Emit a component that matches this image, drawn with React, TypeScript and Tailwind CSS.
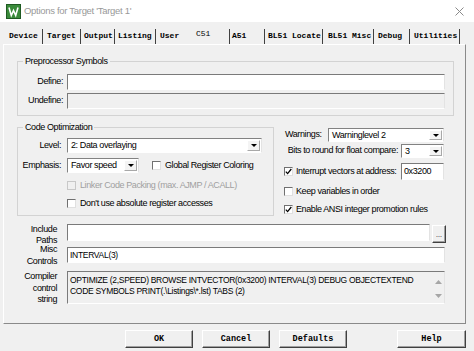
import React from "react";

const tabs = [
  { label: "Device", cls: "w-[37px] pl-[3px] border-r" },
  { label: "Target", cls: "w-[38px] pl-[4px] border-r" },
  { label: "Output", cls: "w-[34px] pl-[3px] border-r" },
  { label: "Listing", cls: "w-[41px] pl-[3px] border-r" },
  { label: "User", cls: "w-[30px] pl-[4px]" },
  { label: "C51", cls: "w-[43px] pl-[10px] font-normal -mt-[2px]" },
  { label: "A51", cls: "w-[36px] pl-[2px] border-l border-r" },
  { label: "BL51 Locate", cls: "w-[58px] pl-[3px] border-r" },
  { label: "BL51 Misc", cls: "w-[51px] pl-[5px] border-r" },
  { label: "Debug", cls: "w-[36px] pl-[4px] border-r" },
  { label: "Utilities", cls: "w-[50px] pl-[4px] border-r" },
];

const Check = ({ checked = false, disabled = false }: { checked?: boolean; disabled?: boolean }) => (
  <span
    className={
      "w-[9px] h-[9px] shrink-0 flex items-center justify-center border " +
      (disabled
        ? "border-[#c8c8c8] bg-[#f0f0f0]"
        : "border-t-[#707070] border-l-[#707070] border-b-[#e0e0e0] border-r-[#e0e0e0] bg-white")
    }
  >
    {checked && (
      <svg width="7" height="7" viewBox="0 0 7 7">
        <path d="M0.8 3.6 L2.6 5.6 L6.3 1" stroke="#000" strokeWidth="1.3" fill="none" />
      </svg>
    )}
  </span>
);

const Combo = ({ value, className }: { value: string; className: string }) => (
  <div
    className={
      "flex bg-white border border-t-[#828282] border-l-[#828282] border-b-white border-r-[#e3e3e3] " +
      className
    }
  >
    <span className="flex-1 min-w-0 pl-[3px] self-center whitespace-nowrap leading-[11px]">{value}</span>
    <span className="w-[13px] my-[1px] mr-[1px] flex items-center justify-center bg-[#f4f4f4] border border-t-white border-l-white border-b-[#a8a8a8] border-r-[#a8a8a8]">
      <svg width="6" height="3" viewBox="0 0 6 3">
        <path d="M0 0h6L3 3z" fill="#000" />
      </svg>
    </span>
  </div>
);

const sunken = "border border-t-[#7a7a7a] border-l-[#7a7a7a] border-b-white border-r-[#e3e3e3]";
const raised =
  "bg-[#f0f0f0] border border-t-white border-l-white border-r-[#404040] border-b-[#404040] shadow-[inset_-1px_-1px_0_#a0a0a0]";

export default function App() {
  return (
    <div className="w-[474px] h-[351px] overflow-hidden bg-[#f0f0f0] text-black text-[9px] tracking-[-0.4px] whitespace-nowrap font-['Liberation_Sans',Arial,sans-serif]">
      {/* title bar */}
      <div className="h-[22px] bg-white flex items-center pl-[6px]">
        <svg width="15" height="15" viewBox="0 0 15 15">
          <rect x="0.5" y="0.5" width="14" height="14" fill="#3a8a3a" stroke="#1f5a22" />
          <path d="M3 3.5 L5.3 11.5 L7.5 6.5 L9.7 11.5 L12 3.5" stroke="#fff" strokeWidth="1.6" fill="none" />
        </svg>
        <span className="ml-[3px] text-[9.5px] tracking-[-0.3px] text-[#999]">Options for Target 'Target 1'</span>
        <svg className="ml-auto mr-[10px]" width="9" height="9" viewBox="0 0 9 9">
          <path d="M0.5 0.5 L8.5 8.5 M8.5 0.5 L0.5 8.5" stroke="#8a8a8a" strokeWidth="1" />
        </svg>
      </div>

      {/* tabs */}
      <div className="h-[22px] pt-[7px] pl-[6px] flex font-['Liberation_Mono',monospace] font-bold text-[8px] tracking-normal">
        {tabs.map((t) => (
          <div key={t.label} className={"h-[15px] pt-[1px] leading-[11px] border-[#404040] " + t.cls}>
            {t.label}
          </div>
        ))}
      </div>

      {/* tab panel */}
      <div className="ml-[3px] w-[463px] h-[280px] border border-t-white border-l-white border-r-[#8a8a8a] border-b-[#8a8a8a] pl-[13px] pt-[11px]">
        <fieldset className="w-[437px] border border-[#d3d3d3] pb-[6px]">
          <legend className="ml-[5px] px-[2px] leading-[11px]">Preprocessor Symbols</legend>
          <div className="pt-[7px] flex flex-col gap-[3px]">
            <div className="flex items-center">
              <span className="w-[45px] text-right">Define:</span>
              <div className={"ml-[4px] w-[378px] h-[16px] bg-white " + sunken} />
            </div>
            <div className="flex items-center">
              <span className="w-[45px] text-right">Undefine:</span>
              <div className={"ml-[4px] w-[378px] h-[16px] bg-[#f0f0f0] " + sunken} />
            </div>
          </div>
        </fieldset>

        <div className="flex mt-[6px]">
          <fieldset className="w-[257px] border border-[#d3d3d3] pt-[5px] pb-[5px]">
            <legend className="ml-[5px] px-[2px] leading-[11px]">Code Optimization</legend>
            <div className="flex items-center">
              <span className="w-[43px] text-right">Level:</span>
              <Combo value="2: Data overlaying" className="ml-[6px] w-[195px] h-[15px]" />
            </div>
            <div className="flex items-center mt-[5px]">
              <span className="w-[43px] text-right">Emphasis:</span>
              <Combo value="Favor speed" className="ml-[6px] w-[72px] h-[15px]" />
              <span className="ml-[13px]">
                <Check />
              </span>
              <span className="ml-[4px]">Global Register Coloring</span>
            </div>
            <div className="flex items-center mt-[6px] h-[13px] pl-[49px]">
              <Check disabled />
              <span className="ml-[4px] text-[#a0a0a0]">Linker Code Packing (max. AJMP / ACALL)</span>
            </div>
            <div className="flex items-center mt-[5px] h-[13px] pl-[49px]">
              <Check />
              <span className="ml-[4px]">Don't use absolute register accesses</span>
            </div>
          </fieldset>

          <div className="w-[160px] ml-[10px] pt-[6px] flex flex-col">
            <div className="flex items-center h-[14px]">
              <span className="w-[44px] pl-[1px]">Warnings:</span>
              <Combo value="Warninglevel 2" className="w-[116px] h-[14px]" />
            </div>
            <div className="flex items-center justify-end mt-[2px] h-[14px]">
              <span className="mr-[3px]">Bits to round for float compare:</span>
              <Combo value="3" className="w-[43px] h-[14px]" />
            </div>
            <div className="flex items-center mt-[5px] h-[17px]">
              <Check checked />
              <span className="ml-[3px]">Interrupt vectors at address:</span>
              <div className={"ml-auto w-[43px] h-[17px] bg-white pl-[2px] flex items-center " + sunken}>0x3200</div>
            </div>
            <div className="flex items-center mt-[5px] h-[13px]">
              <Check />
              <span className="ml-[3px]">Keep variables in order</span>
            </div>
            <div className="flex items-center mt-[5px] h-[13px]">
              <Check checked />
              <span className="ml-[3px]">Enable ANSI integer promotion rules</span>
            </div>
          </div>
        </div>

        <div className="flex items-start mt-[7px] h-[21px]">
          <div className="w-[40px] text-right leading-[10px] mt-[1px] flex flex-col gap-[1px]">
            <span>Include</span>
            <span>Paths</span>
          </div>
          <div className={"ml-[10px] mt-[1px] w-[363px] h-[17px] bg-white " + sunken} />
          <button className={"ml-[2px] mt-[2px] w-[14px] h-[18px] flex items-end justify-center pb-[4px] text-[7px] leading-none tracking-normal " + raised}>
            ...
          </button>
        </div>

        <div className="flex items-start h-[24px]">
          <div className="w-[40px] text-right leading-[10px] flex flex-col gap-[2px]">
            <span>Misc</span>
            <span>Controls</span>
          </div>
          <div className={"ml-[10px] mt-[3px] w-[378px] h-[16px] bg-white pl-[2px] flex items-center text-[8.5px] tracking-[-0.3px] " + sunken}>
            INTERVAL(3)
          </div>
        </div>

        <div className="flex items-start">
          <div className="w-[40px] text-right leading-[10px] mt-[3px] flex flex-col gap-[1.5px]">
            <span>Compiler</span>
            <span>control</span>
            <span>string</span>
          </div>
          <div className={"ml-[10px] mt-[3px] w-[378px] h-[33px] bg-[#f0f0f0] flex " + sunken}>
            <div className="flex-1 min-w-0 overflow-hidden pl-[2px] pt-[3px] leading-[11px] text-[8.5px] tracking-[-0.3px]">
              OPTIMIZE (2,SPEED) BROWSE INTVECTOR(0x3200) INTERVAL(3) DEBUG OBJECTEXTEND
              <br />
              CODE SYMBOLS PRINT(.\Listings\*.lst) TABS (2)
            </div>
            <div className="w-[12px] shrink-0 flex flex-col items-center justify-between pt-[8px] pb-[5px]">
              <svg width="7" height="4" viewBox="0 0 7 4">
                <path d="M0 4h7L3.5 0z" fill="#a6a6a6" />
              </svg>
              <svg width="7" height="4" viewBox="0 0 7 4">
                <path d="M0 0h7L3.5 4z" fill="#a6a6a6" />
              </svg>
            </div>
          </div>
        </div>
      </div>

      {/* buttons */}
      <div className="flex mt-[6px] pl-[125px] gap-[9px] font-['Liberation_Mono',monospace] font-bold text-[8.5px] tracking-normal">
        <button className={"w-[68px] h-[18px] " + raised}>OK</button>
        <button className={"w-[68px] h-[18px] " + raised}>Cancel</button>
        <button className={"w-[68px] h-[18px] " + raised}>Defaults</button>
        <button className={"ml-[41px] w-[69px] h-[18px] " + raised}>Help</button>
      </div>
    </div>
  );
}
